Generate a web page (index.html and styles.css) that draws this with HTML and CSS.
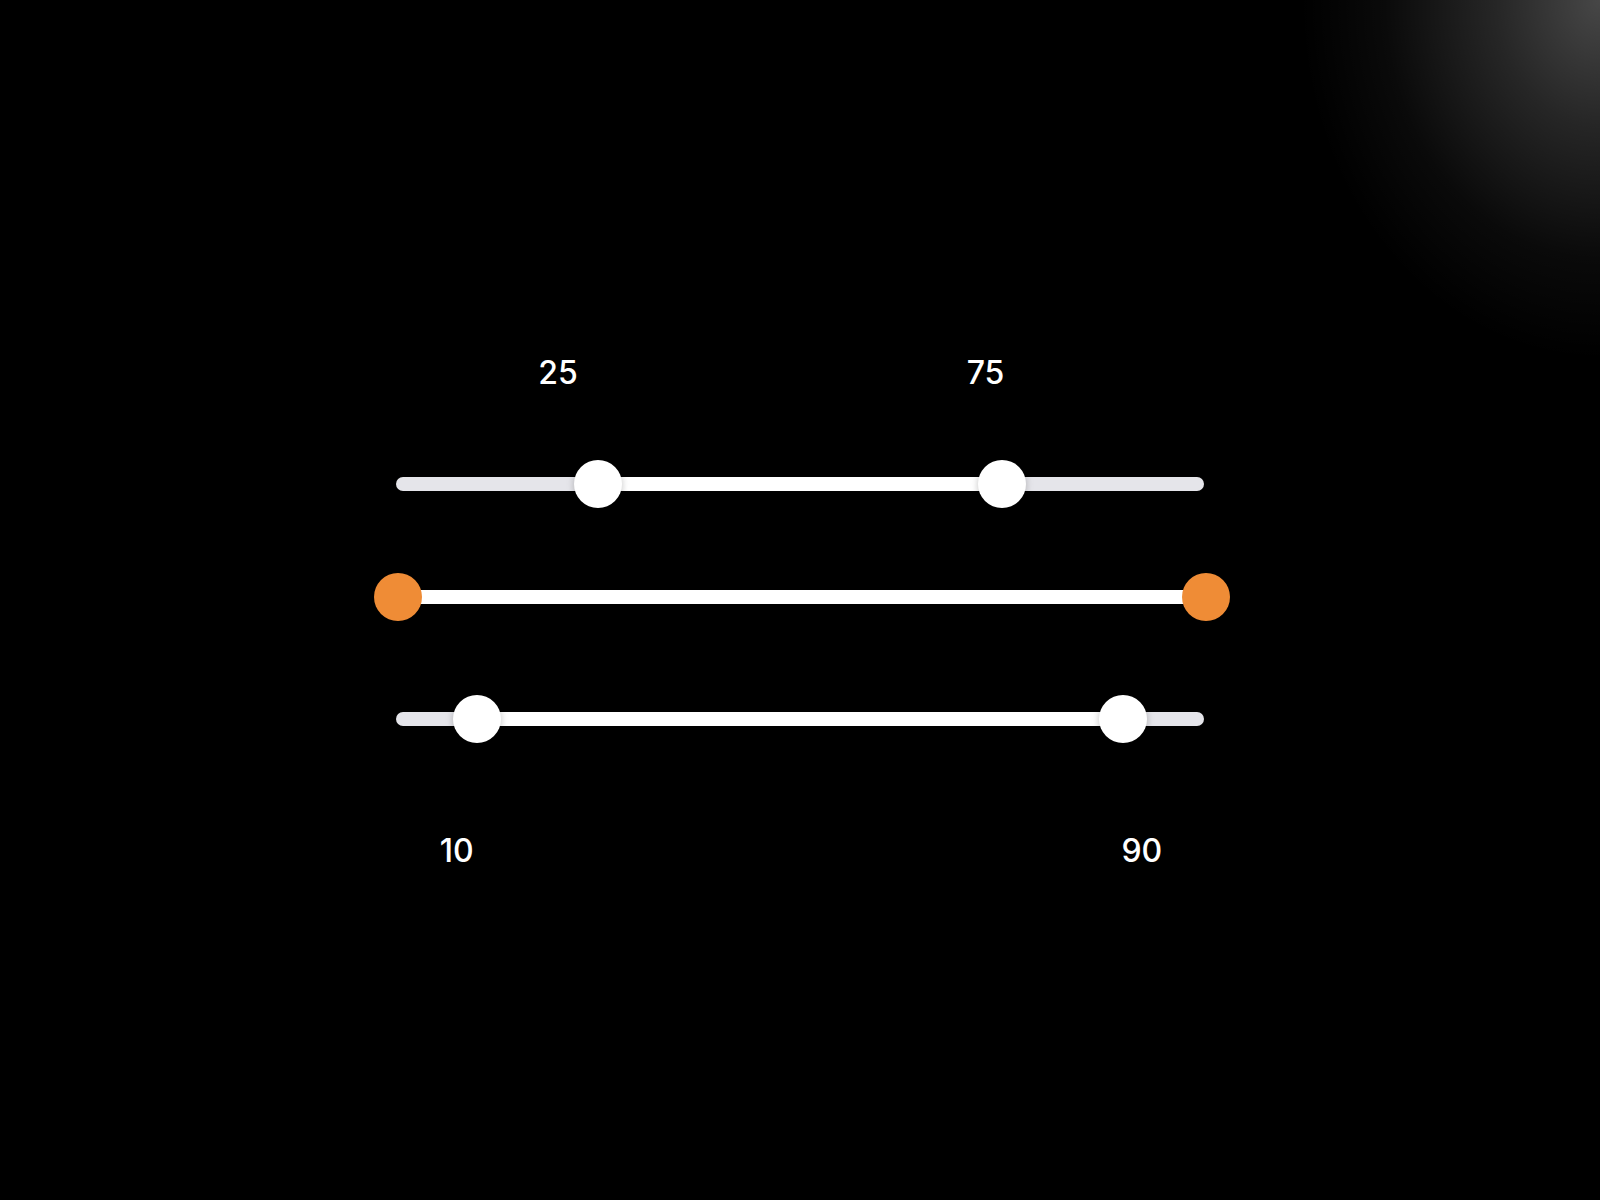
FILE: index.html
```html
<!DOCTYPE html>
<html lang="en">
<head>
  <meta charset="UTF-8" />
  <meta name="viewport" content="width=device-width, initial-scale=1.0"/>
  <title>Range Sliders</title>
  <link rel="stylesheet" href="styles.css">
</head>
<body>
  <main class="stage">
    <!-- labels for the first slider -->
    <div class="labels">
      <span class="label" style="left: 20.05%">25</span>
      <span class="label" style="left: 72.96%">75</span>
    </div>

    <div class="slider slider-top">
      <div class="track">
        <div class="range" style="left: 25%; width: 50%"></div>
      </div>
      <div class="thumb" style="left: 25%"></div>
      <div class="thumb" style="left: 75%"></div>
    </div>

    <div class="slider slider-mid">
      <div class="track">
        <div class="range" style="left: 0%; width: 100%"></div>
      </div>
      <div class="thumb orange" style="left: 0.25%"></div>
      <div class="thumb orange" style="left: 100.3%"></div>
    </div>

    <div class="slider slider-bottom">
      <div class="track">
        <div class="range" style="left: 10%; width: 80%"></div>
      </div>
      <div class="thumb" style="left: 10%"></div>
      <div class="thumb" style="left: 90%"></div>
    </div>

    <!-- labels for the last slider -->
    <div class="labels labels-bottom">
      <span class="label" style="left: 7.5%">10</span>
      <span class="label" style="left: 92.3%">90</span>
    </div>
  </main>
</body>
</html>
```

FILE: styles.css
```css
* {
  box-sizing: border-box;
}

html, body {
  height: 100%;
}

body {
  margin: 0;
  font-family: 'Inter', 'Noto Sans', sans-serif;
  color: #fff;
  background-color: #000;
  background-image: radial-gradient(ellipse 300px 360px at 100% 0,
    rgba(255, 255, 255, 0.28) 0,
    rgba(255, 255, 255, 0.15) 35%,
    rgba(255, 255, 255, 0.04) 72%,
    rgba(255, 255, 255, 0) 100%);
  background-repeat: no-repeat;
  overflow: hidden;
}

.stage {
  width: 808px;
  margin: 0 auto;
  padding-top: 353px;
}

.labels {
  position: relative;
  height: 40px;
}

.labels-bottom {
  margin-top: 88px;
}

.label {
  position: absolute;
  top: 0;
  font-size: 32px;
  line-height: 40px;
  font-weight: 500;
  transform: translateX(-50%);
}

.slider {
  position: relative;
  height: 48px;
  display: flex;
  align-items: center;
}

.slider-top {
  margin-top: 67px;
}

.slider-mid {
  margin-top: 65px;
}

.slider-bottom {
  margin-top: 74px;
}

.track {
  position: relative;
  width: 100%;
  height: 14px;
  border-radius: 7px;
  background-color: #e5e5ea;
}

.range {
  position: absolute;
  top: 0;
  bottom: 0;
  background-color: #fff;
}

.thumb {
  position: absolute;
  top: 0;
  width: 48px;
  height: 48px;
  border-radius: 50%;
  background-color: #fff;
  box-shadow: 0 0 8px rgba(0, 0, 0, 0.15), 0 3px 6px rgba(0, 0, 0, 0.1);
  transform: translateX(-50%);
}

.thumb.orange {
  background-color: #ef8c36;
  box-shadow: none;
}
```
